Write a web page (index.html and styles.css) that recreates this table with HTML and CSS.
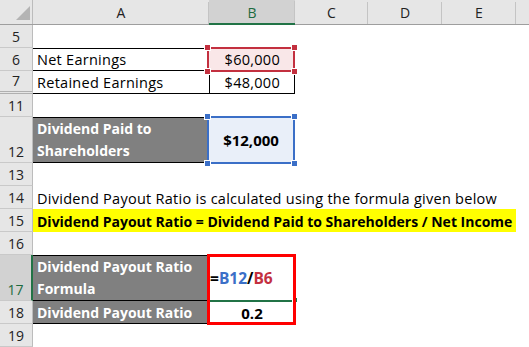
FILE: index.html
```html
<!DOCTYPE html>
<html>
<head>
<meta charset="utf-8">
<link rel="stylesheet" href="styles.css">
</head>
<body>
<div class="sheet">
  <div class="hd corner"><svg class="tri" width="16" height="16" viewBox="0 0 16 16"><polygon points="15,1 15,15 1,15" fill="#b4b4b4"/></svg></div>
  <div class="hd">A</div>
  <div class="hd sel">B</div>
  <div class="hd">C</div>
  <div class="hd">D</div>
  <div class="hd">E</div>
  <div class="hd last"></div>

  <div class="rh">5</div><div class="c full"></div>

  <div class="rh">6</div>
  <div class="c bt bb">Net Earnings</div>
  <div class="c right ref ref-red">$60,000<i class="h tl"></i><i class="h tr"></i><i class="h bl"></i><i class="h br"></i></div>
  <div class="c rest"></div>

  <div class="rh dbl">7</div>
  <div class="c bb">Retained Earnings</div>
  <div class="c right bl-b br-b bb">$48,000</div>
  <div class="c rest"></div>

  <div class="rh">11</div><div class="c full"></div>

  <div class="rh tall">12</div>
  <div class="c gray bt bb wrap">Dividend Paid to<br>Shareholders</div>
  <div class="c center bold big ref ref-blue">$12,000<i class="h tl"></i><i class="h tr"></i><i class="h bl"></i><i class="h br"></i></div>
  <div class="c rest"></div>

  <div class="rh">13</div><div class="c full"></div>

  <div class="rh">14</div><div class="c full">Dividend Payout Ratio is calculated using the formula given below</div>

  <div class="rh">15</div><div class="c span5 yellow bold">Dividend Payout Ratio = Dividend Paid to Shareholders / Net Income</div><div class="c"></div>

  <div class="rh">16</div><div class="c full"></div>

  <div class="rh tall active">17</div>
  <div class="c gray bt bb wrap">Dividend Payout Ratio<br>Formula</div>
  <div class="c formula bold"><span>=</span><span class="fb">B12</span><span>/</span><span class="fr">B6</span><i class="green-line"></i><i class="fill"></i><i class="redbox"></i></div>
  <div class="c rest"></div>

  <div class="rh">18</div>
  <div class="c gray bb">Dividend Payout Ratio</div>
  <div class="c center bold big">0.2</div>
  <div class="c rest"></div>

  <div class="rh">19</div><div class="c full"></div>
</div>
</body>
</html>
```

FILE: styles.css
```css
html, body {
  margin: 0;
  padding: 0;
  background: #fff;
}
.sheet {
  width: 529px;
  height: 347px;
  overflow: hidden;
  display: grid;
  grid-template-columns: 33px 176px 86px 73px 74px 74px 13px;
  grid-template-rows: 25px 23px 23px 23px 23px 46px 23px 23px 23px 23px 46px 23px 23px;
  font-family: "Open Sans", "Liberation Sans", sans-serif;
  font-size: 14.5px;
  color: #000;
}
.hd {
  box-sizing: border-box;
  background: linear-gradient(#c4c4c4, #c4c4c4) right 0 bottom 0 / 1px 22px no-repeat, #e6e6e6;
  border-bottom: 1px solid #9e9e9e;
  display: flex;
  align-items: center;
  justify-content: center;
  color: #222;
  font-size: 14px;
  padding-top: 1px;
}
.hd.corner {
  align-items: flex-end;
  justify-content: flex-end;
  padding: 0 2px 3px 0;
  background: linear-gradient(#bcbcbc, #bcbcbc) right 0 bottom 0 / 1px 25px no-repeat, #e6e6e6;
}
.tri { display: block; }
.hd.sel {
  background: linear-gradient(#c4c4c4, #c4c4c4) right 0 bottom 0 / 1px 22px no-repeat, #d2d2d2;
  border-bottom: 2px solid #217346;
  color: #1e6b40;
}
.hd.last { background: #e6e6e6; }
.rh {
  grid-column: 1;
  box-sizing: border-box;
  background: #e6e6e6;
  border-bottom: 1px solid #c9c9c9;
  border-right: 1px solid #bcbcbc;
  display: flex;
  align-items: flex-end;
  justify-content: center;
  padding-bottom: 1px;
  color: #222;
  font-size: 14px;
}
.rh.dbl { border-bottom: 3px double #b0b0b0; }
.rh.active {
  background: #d2d2d2;
  border-right: 2px solid #217346;
  color: #1e6b40;
}
.c {
  box-sizing: border-box;
  display: flex;
  align-items: flex-end;
  padding: 0 3px 1px 4px;
  white-space: nowrap;
  min-width: 0;
  letter-spacing: 0.27px;
}
.full { grid-column: 2 / -1; }
.span5 { grid-column: 2 / 7; }
.rest { grid-column: 4 / -1; }
.bt { border-top: 1px solid #000; }
.bb { border-bottom: 1px solid #000; }
.bl-b { border-left: 1px solid #000; }
.br-b { border-right: 1px solid #000; }
.right { justify-content: flex-end; padding-right: 14px; }
.center { justify-content: center; align-items: center; padding: 0; }
.bold { font-weight: 700; font-size: 14px; letter-spacing: 0; }
.big { font-size: 15px; }
.gray {
  background: #808080;
  color: #fff;
  font-weight: 700;
  font-size: 14px;
  letter-spacing: 0;
}
.wrap {
  white-space: normal;
  line-height: 22px;
  padding-bottom: 0;
}
.yellow { background: #ffff00; }
.ref {
  position: relative;
  margin: -1px 0 -1px -2px;
  border: 2px solid;
}
.ref-red {
  border-color: #c3303f;
  background: #f9e7e8;
  padding-right: 13px;
}
.ref-blue {
  border-color: #3b6fc7;
  background: #e9eff9;
  z-index: 1;
}
.h {
  position: absolute;
  width: 5px;
  height: 5px;
}
.ref-red .h { background: #c3303f; border: 1px solid #fff; }
.ref-blue .h { background: #3b6fc7; border: 1px solid #fff; }
.h.tl { left: -5px; top: -5px; }
.h.tr { right: -5px; top: -5px; }
.h.bl { left: -5px; bottom: -5px; }
.h.br { right: -5px; bottom: -5px; }
.formula {
  position: relative;
  align-items: center;
  padding: 0 0 0 1px;
  font-size: 15.5px;
}
.fb { color: #3b6fc7; }
.fr { color: #c3303f; }
.green-line {
  position: absolute;
  left: 1px;
  right: 2px;
  bottom: -1px;
  height: 2px;
  background: #217346;
}
.fill {
  position: absolute;
  right: -3px;
  bottom: -2px;
  width: 4px;
  height: 4px;
  background: #217346;
  border: 1px solid #fff;
}
.redbox {
  position: absolute;
  left: -2px;
  top: -1px;
  width: 89px;
  height: 71px;
  box-sizing: border-box;
  border: 3px solid #ff0000;
  z-index: 2;
}
```
